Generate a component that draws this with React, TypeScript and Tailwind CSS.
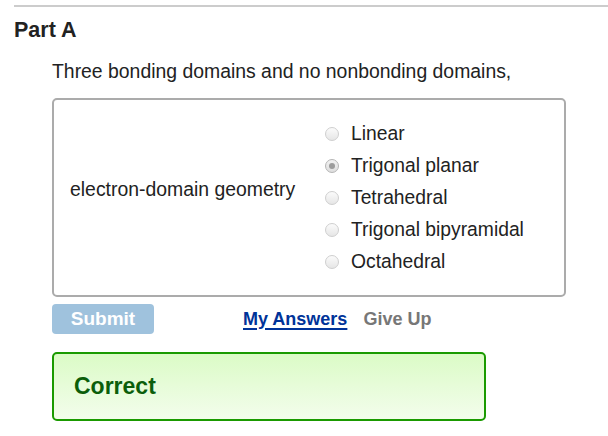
import React from "react"

const options = ["Linear", "Trigonal planar", "Tetrahedral", "Trigonal bipyramidal", "Octahedral"]

function Radio({ checked }: { checked: boolean }) {
    return (
        <span
            className={
                checked
                    ? "flex h-[14px] w-[14px] items-center justify-center rounded-full border border-[#b5b5b5] bg-gradient-to-b from-[#f2f2f2] to-[#dedede]"
                    : "flex h-[14px] w-[14px] items-center justify-center rounded-full border border-[#cfcfcf] bg-gradient-to-b from-[#fbfbfb] to-[#e6e6e6]"
            }
        >
            {checked && <span className="h-[6px] w-[6px] rounded-full bg-[#9c9c9c]" />}
        </span>
    )
}

export default function App() {
    return (
        <div className="h-[436px] w-[608px] bg-white text-[#222] font-['Liberation_Sans',Arial,sans-serif]">
            <div className="ml-[14px] h-[5px]" />
            <div className="ml-[14px] h-[2px] bg-[#cccccc]" />

            <h2 className="mt-[11px] pl-[14px] text-[21.5px] font-bold leading-[24px]">Part A</h2>

            <p className="mt-[18px] pl-[52px] text-[19.4px] leading-[22px]">
                Three bonding domains and no nonbonding domains,
            </p>

            <div className="ml-[52px] mt-[16px] flex h-[199px] w-[514px] rounded-[5px] border-2 border-[#ababab] pl-[16px] pt-[17px]">
                <div className="mt-[61px] w-[255px] text-[19.4px] leading-[22px]">electron-domain geometry</div>
                <ul className="flex flex-col">
                    {options.map((o) => (
                        <li key={o} className="flex h-[32px] items-center gap-[12px] pt-[1px] text-[19.3px] leading-[32px]">
                            <Radio checked={o === "Trigonal planar"} />
                            <span>{o}</span>
                        </li>
                    ))}
                </ul>
            </div>

            <div className="ml-[52px] mt-[7px] flex h-[30px] items-center">
                <button className="h-[30px] w-[102px] rounded-[4px] bg-[#9fc2dd] text-[19px] font-bold leading-[30px] text-white">
                    Submit
                </button>
                <a className="ml-[89px] text-[18px] font-bold text-[#003399] underline underline-offset-[3px] decoration-2">
                    My Answers
                </a>
                <span className="ml-[16px] text-[18px] font-bold text-[#777]">Give Up</span>
            </div>

            <div className="ml-[52px] mt-[18px] h-[69px] w-[434px] rounded-[5px] border-2 border-[#1a9a00] bg-gradient-to-b from-[#dbfbc6] to-[#f3fdec] pl-[20px] pt-[19px]">
                <span className="text-[23px] font-bold leading-[26px] text-[#0b5e0b]">Correct</span>
            </div>
        </div>
    )
}
